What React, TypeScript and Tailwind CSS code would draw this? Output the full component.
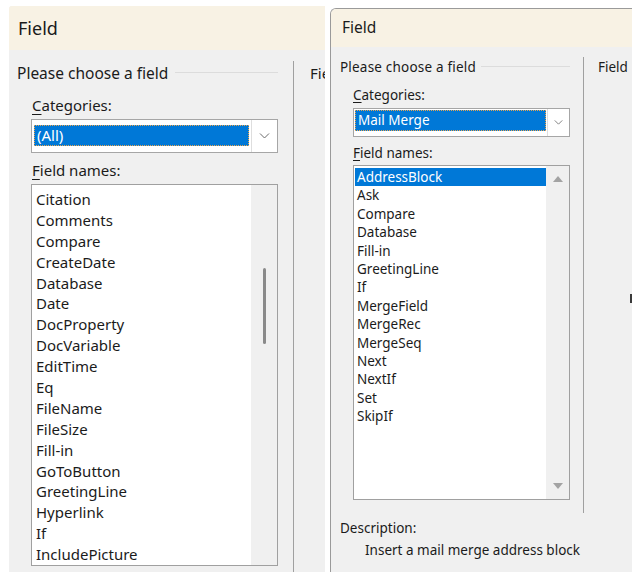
import React from "react";

const leftItems = [
  "Citation","Comments","Compare","CreateDate","Database","Date","DocProperty","DocVariable","EditTime","Eq","FileName","FileSize","Fill-in","GoToButton","GreetingLine","Hyperlink","If","IncludePicture",
];
const rightItems = [
  "AddressBlock","Ask","Compare","Database","Fill-in","GreetingLine","If","MergeField","MergeRec","MergeSeq","Next","NextIf","Set","SkipIf",
];

function Chevron({ w, h }: { w: number; h: number }) {
  return (
    <svg width={w} height={h} viewBox="0 0 10 6" fill="none">
      <polyline points="0.5,0.5 5,5 9.5,0.5" stroke="#6b6b6b" strokeWidth="1" />
    </svg>
  );
}

export default function App() {
  return (
    <div className="w-[641px] h-[579px] bg-white flex pl-[9px] font-['Noto_Sans',sans-serif] text-[#1b1b1b] overflow-hidden">
      {/* Left dialog */}
      <div className="mt-[6px] w-[316px] h-[566px] flex flex-col overflow-hidden rounded-tl-[3px] bg-[#f0f0f0]">
        <div className="h-[44px] shrink-0 bg-[#f8f2e4] flex items-center pl-[9px] text-[18px]">Field</div>
        <div className="flex-1 flex text-[15px]">
          <div className="w-[284px] shrink-0 flex flex-col">
            <div className="mt-[13px] h-[20px] flex items-center pl-[8px] pr-[15px]">
              <span className="leading-[20px] whitespace-nowrap text-[15.5px]">Please choose a field</span>
              <div className="flex-1 h-px bg-[#dcdcdc] ml-[7px] -mt-[2px]" />
            </div>
            <div className="mt-[12px] pl-[23px] leading-[20px]">
              <span className="underline underline-offset-[3px]">C</span>ategories:
            </div>
            <div className="mt-[4px] ml-[22px] w-[247px] h-[34px] border border-[#a6a6a6] bg-white flex">
              <div className="flex-1 pl-[2px] pt-[5px]">
                <div className="h-[21px] bg-[#0078d7] border border-dotted border-[#e8a550] text-white leading-[19px] pl-[2px]">(All)</div>
              </div>
              <div className="w-[26px] ml-[2px] border-l border-[#dedede] flex items-center justify-center">
                <Chevron w={11} h={6} />
              </div>
            </div>
            <div className="mt-[7px] pl-[23px] leading-[20px]">
              <span className="underline underline-offset-[3px]">F</span>ield names:
            </div>
            <div className="mt-[4px] ml-[22px] w-[247px] h-[382px] border border-[#a0a0a0] flex">
              <div className="w-[219px] bg-white pt-[4px] pl-[4px] overflow-hidden">
                {leftItems.map((t) => (
                  <div key={t} className="leading-[20.9px] h-[20.9px]">{t}</div>
                ))}
              </div>
              <div className="flex-1 bg-[#f0f0f0] flex justify-center pt-[83px]">
                <div className="w-[3px] h-[76px] rounded-full bg-[#8a8a8a]" />
              </div>
            </div>
          </div>
          <div className="mt-[11px] w-px bg-[#a0a0a0] shrink-0" />
          <div className="ml-[16px] mt-[13px] leading-[20px] whitespace-nowrap">Field</div>
        </div>
      </div>

      {/* Right dialog */}
      <div className="ml-[5px] mt-[8px] w-[302px] h-[564px] flex flex-col overflow-hidden rounded-tl-[6px] border-l border-t border-[#9a9a9a] bg-[#f0f0f0]">
        <div className="h-[38px] shrink-0 bg-[#f8f2e4] flex items-center pl-[11px] text-[15.5px]">Field</div>
        <div className="flex text-[13.5px] h-[466px] shrink-0">
          <div className="w-[252px] shrink-0 flex flex-col">
            <div className="mt-[10px] h-[20px] flex items-center pl-[9px] pr-[13px]">
              <span className="leading-[20px] whitespace-nowrap tracking-[0.2px]">Please choose a field</span>
              <div className="flex-1 h-px bg-[#dcdcdc] ml-[5px] -mt-[2px]" />
            </div>
            <div className="mt-[9px] pl-[22px] leading-[18px]">
              <span className="underline underline-offset-[2px]">C</span>ategories:
            </div>
            <div className="mt-[4px] ml-[22px] w-[217px] h-[29px] border border-[#a6a6a6] bg-white flex">
              <div className="flex-1 pl-[1px] pt-[1px]">
                <div className="h-[21px] bg-[#0078d7] border border-dotted border-[#e8a550] text-white leading-[19px] pl-[2px]">Mail Merge</div>
              </div>
              <div className="w-[22px] ml-[1px] border-l border-[#dedede] flex items-center justify-center">
                <Chevron w={9} h={5} />
              </div>
            </div>
            <div className="mt-[7px] pl-[22px] leading-[18px]">
              <span className="underline underline-offset-[2px]">F</span>ield names:
            </div>
            <div className="mt-[3px] ml-[22px] w-[217px] h-[335px] border border-[#a0a0a0] flex">
              <div className="w-[192px] bg-white pt-[2px] pl-[1px] overflow-hidden">
                {rightItems.map((t, i) => (
                  <div
                    key={t}
                    className={
                      i === 0
                        ? "leading-[18.4px] h-[18.4px] pl-[2px] bg-[#0078d7] text-white"
                        : "leading-[18.4px] h-[18.4px] pl-[2px]"
                    }
                  >
                    {t}
                  </div>
                ))}
              </div>
              <div className="flex-1 bg-[#f0f0f0] flex flex-col items-center justify-between pt-[10px] pb-[10px]">
                <svg width="10" height="6" viewBox="0 0 10 6"><polygon points="5,0 10,6 0,6" fill="#a3a3a3" /></svg>
                <svg width="10" height="6" viewBox="0 0 10 6"><polygon points="0,0 10,0 5,6" fill="#a3a3a3" /></svg>
              </div>
            </div>
          </div>
          <div className="mt-[10px] w-px bg-[#a0a0a0] shrink-0" />
          <div className="flex-1 flex flex-col overflow-hidden">
            <div className="ml-[14px] mt-[10px] leading-[20px] whitespace-nowrap">Field</div>
            <div className="mt-[217px] ml-[46px] w-[2px] h-[9px] bg-[#3a3a3a]" />
          </div>
        </div>
        <div className="mt-[6px] pl-[9px] text-[13.5px] leading-[18px]">Description:</div>
        <div className="mt-[4px] pl-[34px] text-[13.5px] leading-[18px]">Insert a mail merge address block</div>
      </div>
    </div>
  );
}
